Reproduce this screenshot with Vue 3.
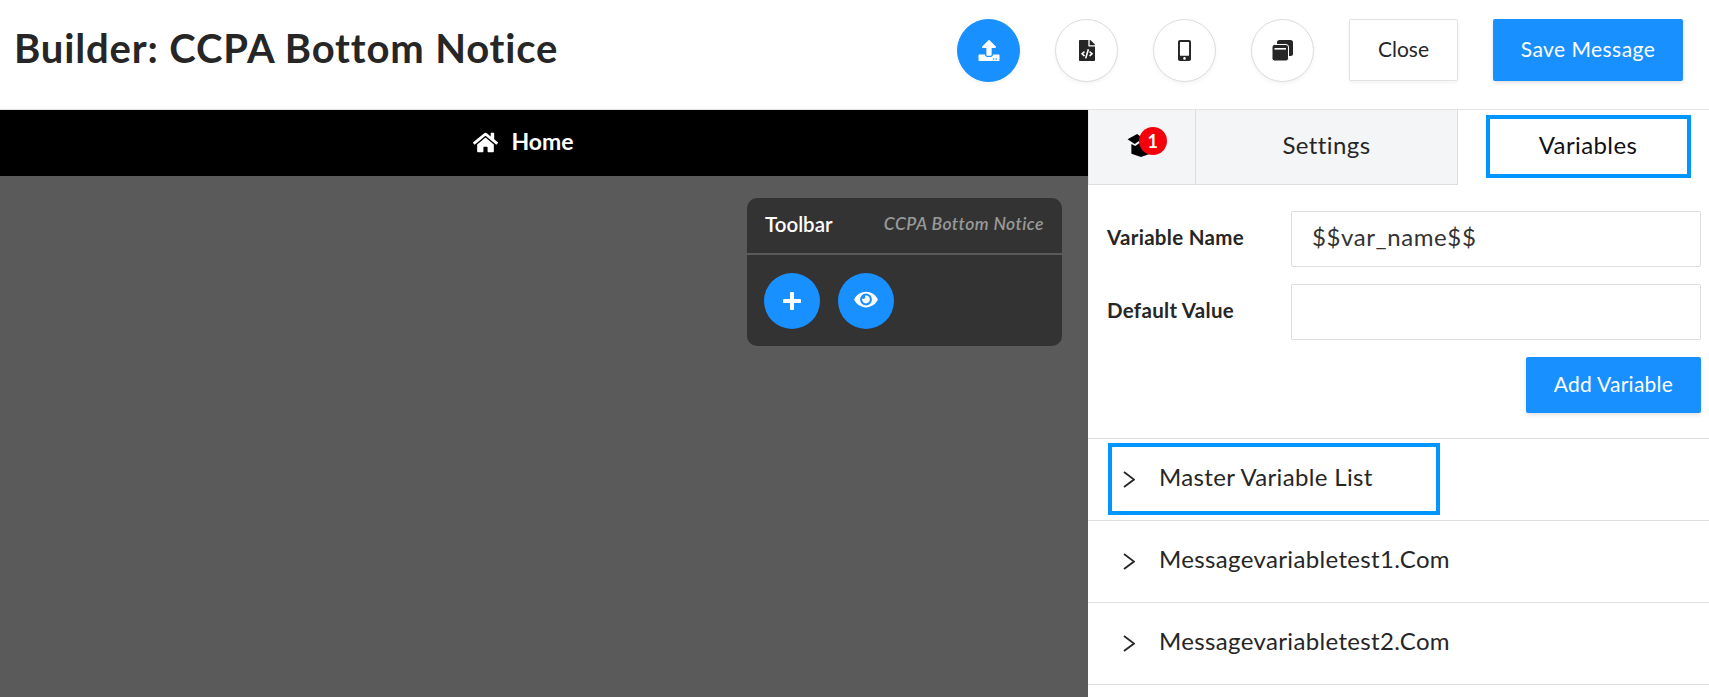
<script setup>
const rows = [
  { label: 'Master Variable List', marked: true },
  { label: 'Messagevariabletest1.Com', marked: false },
  { label: 'Messagevariabletest2.Com', marked: false }
]
</script>

<template>
  <div class="page">
    <header class="top">
      <h1 class="title">Builder: CCPA Bottom Notice</h1>
      <div class="actions">
        <button class="round primary" type="button">
          <svg class="ic-upload" viewBox="0 0 512 512"><path fill="#fff" d="M296 384h-80c-13.3 0-24-10.7-24-24V192h-87.7c-17.8 0-26.7-21.5-14.1-34.1L242.3 5.7c7.5-7.5 19.8-7.5 27.3 0l152.2 152.2c12.6 12.6 3.7 34.1-14.1 34.1H320v168c0 13.3-10.7 24-24 24zm216-8v112c0 13.3-10.7 24-24 24H24c-13.3 0-24-10.7-24-24V376c0-13.3 10.7-24 24-24h136v8c0 30.9 25.1 56 56 56h80c30.9 0 56-25.1 56-56v-8h136c13.3 0 24 10.7 24 24zm-124 88c0-11-9-20-20-20s-20 9-20 20 9 20 20 20 20-9 20-20zm64 0c0-11-9-20-20-20s-20 9-20 20 9 20 20 20 20-9 20-20z"/></svg>
        </button>
        <button class="round" type="button">
          <svg class="ic-file" viewBox="0 0 384 512" preserveAspectRatio="none"><path fill="#262626" d="M384 121.941V128H256V0h6.059c6.365 0 12.47 2.529 16.971 7.029l97.941 97.941A24.005 24.005 0 0 1 384 121.941zM248 160c-13.2 0-24-10.8-24-24V0H24C10.745 0 0 10.745 0 24v464c0 13.255 10.745 24 24 24h336c13.255 0 24-10.745 24-24V160H248zM123.206 400.505a5.4 5.4 0 0 1-7.633.246l-64.866-60.812a5.4 5.4 0 0 1 0-7.879l64.866-60.812a5.4 5.4 0 0 1 7.633.246l19.579 20.885a5.4 5.4 0 0 1-.372 7.747L101.65 336l40.763 35.874a5.4 5.4 0 0 1 .372 7.747l-19.579 20.884zm51.295 50.479l-27.453-7.97a5.402 5.402 0 0 1-3.681-6.692l61.44-211.626a5.402 5.402 0 0 1 6.692-3.681l27.452 7.97a5.4 5.4 0 0 1 3.68 6.692l-61.44 211.626a5.397 5.397 0 0 1-6.69 3.681zm160.792-111.045l-64.866 60.812a5.4 5.4 0 0 1-7.633-.246l-19.58-20.885a5.4 5.4 0 0 1 .372-7.747L284.35 336l-40.763-35.874a5.4 5.4 0 0 1-.372-7.747l19.58-20.885a5.4 5.4 0 0 1 7.633-.246l64.866 60.812a5.4 5.4 0 0 1-.001 7.879z"/></svg>
        </button>
        <button class="round" type="button">
          <svg class="ic-mobile" viewBox="0 0 320 512" preserveAspectRatio="none"><path fill="#262626" d="M272 0H48C21.5 0 0 21.5 0 48v416c0 26.5 21.5 48 48 48h224c26.5 0 48-21.5 48-48V48c0-26.5-21.5-48-48-48zM160 480c-17.7 0-32-14.3-32-32s14.3-32 32-32 32 14.3 32 32-14.3 32-32 32zm112-108c0 6.6-5.4 12-12 12H60c-6.6 0-12-5.4-12-12V60c0-6.6 5.4-12 12-12h200c6.6 0 12 5.4 12 12v312z"/></svg>
        </button>
        <button class="round" type="button">
          <svg class="ic-copy" viewBox="0 0 21 21"><rect x="5" y="0" width="16" height="16" rx="2.5" fill="#262626"/><rect x="0" y="4.5" width="16.5" height="16.5" rx="2.5" fill="#262626" stroke="#fff" stroke-width="1"/><rect x="2.5" y="8" width="11.5" height="1.6" fill="#fff"/></svg>
        </button>
        <button class="btn-close" type="button">Close</button>
        <button class="btn-save" type="button">Save Message</button>
      </div>
    </header>

    <div class="main">
      <section class="stage">
        <div class="page-bar">
          <svg class="ic-home" viewBox="0 0 576 512"><path fill="#fff" d="M280.37 148.26L96 300.11V464a16 16 0 0 0 16 16l112.06-.29a16 16 0 0 0 15.92-16V368a16 16 0 0 1 16-16h64a16 16 0 0 1 16 16v95.64a16 16 0 0 0 16 16.05L464 480a16 16 0 0 0 16-16V300L295.67 148.26a12.19 12.19 0 0 0-15.3 0zM571.6 251.47L488 182.56V44.05a12 12 0 0 0-12-12h-56a12 12 0 0 0-12 12v72.61L318.47 43a48 48 0 0 0-61 0L4.34 251.47a12 12 0 0 0-1.6 16.9l25.5 31A12 12 0 0 0 45.15 301l235.22-193.74a12.19 12.19 0 0 1 15.3 0L530.9 301a12 12 0 0 0 16.9-1.6l25.5-31a12 12 0 0 0-1.7-16.93z"/></svg>
          <span class="home-label">Home</span>
        </div>
        <div class="canvas">
          <div class="toolbar">
            <div class="toolbar-head">
              <span class="toolbar-title">Toolbar</span>
              <span class="toolbar-name">CCPA Bottom Notice</span>
            </div>
            <div class="toolbar-body">
              <button class="tool" type="button">
                <svg class="ic-plus" viewBox="0 0 18 18"><path d="M9 1.5v15M1.5 9h15" stroke="#fff" stroke-width="4" stroke-linecap="round"/></svg>
              </button>
              <button class="tool" type="button">
                <svg class="ic-eye" viewBox="0 0 576 512"><path fill="#fff" d="M572.52 241.4C518.29 135.59 410.93 64 288 64S57.68 135.64 3.48 241.41a32.35 32.35 0 0 0 0 29.19C57.71 376.41 165.07 448 288 448s230.32-71.64 284.52-177.41a32.35 32.35 0 0 0 0-29.19zM288 400a144 144 0 1 1 144-144 143.93 143.93 0 0 1-144 144zm0-240a95.31 95.31 0 0 0-25.31 3.79 47.85 47.85 0 0 1-66.9 66.9A95.78 95.78 0 1 0 288 160z"/></svg>
              </button>
            </div>
          </div>
        </div>
      </section>

      <aside class="panel">
        <div class="tabs">
          <div class="tab tab-box">
            <svg class="ic-box" viewBox="0 0 26 24"><path fill="#000" d="M0 5.5 10 0l6 4.5-8.5 6z"/><path fill="#000" d="M4 10.5 8 12.5 16 7l9 3v10L14 24 4 20.5z"/></svg>
            <span class="badge">1</span>
          </div>
          <div class="tab tab-settings">Settings</div>
          <div class="tab tab-variables">
            Variables
            <span class="mark mark-tab"></span>
          </div>
        </div>

        <form class="form" @submit.prevent>
          <div class="field">
            <label class="label">Variable Name</label>
            <div class="input">$$var_name$$</div>
          </div>
          <div class="field">
            <label class="label">Default Value</label>
            <div class="input"></div>
          </div>
          <div class="form-foot">
            <button class="btn-add" type="button">Add Variable</button>
          </div>
        </form>

        <ul class="list">
          <li v-for="row in rows" :key="row.label" class="row">
            <svg class="chev" viewBox="0 0 12 17"><path d="M1 1l10 7.5-10 7.5" fill="none" stroke="#262626" stroke-width="1.8"/></svg>
            <span class="row-label">{{ row.label }}</span>
            <span v-if="row.marked" class="mark mark-row"></span>
          </li>
        </ul>
      </aside>
    </div>
  </div>
</template>

<style>
html, body { margin: 0; background: #fff; }
</style>

<style scoped>
* { box-sizing: border-box; }
.page {
  width: 1709px;
  height: 697px;
  overflow: hidden;
  font-family: Lato, "Open Sans", sans-serif;
  color: #262626;
  background: #fff;
}
button { font-family: inherit; cursor: pointer; }

.top {
  height: 110px;
  border-bottom: 1px solid #e3e3e3;
  display: flex;
  justify-content: space-between;
  padding: 0 26px 0 14px;
}
.title {
  margin: 0;
  padding-top: 24px;
  font-size: 40px;
  line-height: 48px;
  font-weight: 700;
  letter-spacing: .85px;
  color: #262626;
}
.actions {
  display: flex;
  padding-top: 19px;
  align-items: flex-start;
}
.round {
  width: 63px;
  height: 63px;
  margin-right: 35px;
  border-radius: 50%;
  border: 1px solid #dcdcdc;
  background: #fff;
  box-shadow: 0 2px 4px rgba(0, 0, 0, .05);
  display: flex;
  align-items: center;
  justify-content: center;
  padding: 0;
}
.round.primary { background: #1890ff; border-color: #1890ff; }
.ic-upload { width: 22px; height: 21px; }
.ic-file { width: 16px; height: 21px; }
.ic-mobile { width: 13px; height: 21px; }
.ic-copy { width: 21px; height: 21px; }
.btn-close {
  width: 109px;
  height: 62px;
  margin-right: 35px;
  padding: 0 0 4px;
  border: 1px solid #e2e2e2;
  border-radius: 2px;
  background: #fff;
  color: #262626;
  font-size: 21px;
  box-shadow: 0 2px 4px rgba(0, 0, 0, .05);
}
.btn-save {
  width: 190px;
  height: 62px;
  padding: 0 0 4px;
  border: 0;
  border-radius: 2px;
  background: #1890ff;
  color: #fff;
  font-size: 21px;
  letter-spacing: .45px;
  box-shadow: 0 2px 4px rgba(0, 0, 0, .12);
}

.main { display: flex; height: 587px; }
.stage { width: 1088px; display: flex; flex-direction: column; }
.page-bar {
  height: 66px;
  background: #000;
  display: flex;
  align-items: center;
  justify-content: center;
  gap: 13px;
  color: #fff;
  padding-right: 41px;
}
.ic-home { width: 25px; height: 23px; margin-bottom: 2px; }
.home-label { font-size: 23px; font-weight: 700; padding-bottom: 4px; }
.canvas {
  flex: 1;
  background: #5a5a5a;
  display: flex;
  justify-content: flex-end;
  align-items: flex-start;
  padding: 22px 26px 0 0;
}
.toolbar {
  width: 315px;
  height: 148px;
  background: #333;
  border-radius: 10px;
  color: #fff;
}
.toolbar-head {
  height: 57px;
  border-bottom: 2px solid #5a5a5a;
  display: flex;
  justify-content: space-between;
  align-items: center;
  padding: 0 18px 4px;
}
.toolbar-title { font-size: 20.5px; font-weight: 600; }
.toolbar-name { font-size: 17.5px; font-style: italic; font-weight: 600; letter-spacing: .45px; color: #999; }
.toolbar-body { display: flex; gap: 18px; padding: 18px 17px; }
.tool {
  width: 56px;
  height: 56px;
  border: 0;
  padding: 0;
  border-radius: 50%;
  background: #1890ff;
  display: flex;
  align-items: center;
  justify-content: center;
}
.ic-plus { width: 18px; height: 18px; margin-bottom: 1px; }
.ic-eye { width: 24px; height: 21px; margin-bottom: 4px; }

.panel { width: 621px; background: #fff; }
.tabs { display: flex; height: 75px; }
.tab {
  position: relative;
  display: flex;
  align-items: center;
  justify-content: center;
  font-size: 24px;
  letter-spacing: .4px;
  color: #262626;
  padding-bottom: 6px;
}
.tab-box {
  width: 108px;
  background: #f4f5f7;
  border-bottom: 1px solid #ddd;
  border-right: 1px solid #ddd;
  border-left: 1px solid #e6e6e6;
}
.tab-settings {
  width: 262px;
  background: #f4f5f7;
  border-bottom: 1px solid #ddd;
  border-right: 1px solid #ddd;
}
.tab-variables { flex: 1; color: #111; padding-left: 9px; }
.ic-box { position: absolute; left: 38px; top: 24px; width: 26px; height: 23px; }
.badge {
  position: absolute;
  left: 50px;
  top: 17px;
  width: 28px;
  height: 28px;
  border-radius: 50%;
  background: #f5000a;
  color: #fff;
  font-size: 18px;
  font-weight: 700;
  line-height: 28px;
  text-align: center;
}
.mark { position: absolute; border: 4px solid #0096ff; pointer-events: none; }
.mark-tab { left: 28px; top: 5px; width: 205px; height: 63px; }

.form { padding: 26px 8px 0 19px; }
.field { display: flex; align-items: center; margin-bottom: 17px; }
.label {
  width: 184px;
  padding-bottom: 4px;
  font-size: 20.5px;
  font-weight: 700;
  letter-spacing: .3px;
  color: #262626;
}
.input {
  flex: 1;
  height: 56px;
  border: 1px solid #ddd;
  border-radius: 2px;
  padding: 0 20px;
  font-size: 24px;
  letter-spacing: .6px;
  line-height: 49px;
  color: #333;
}
.form-foot { display: flex; justify-content: flex-end; }
.btn-add {
  width: 175px;
  height: 56px;
  padding: 0 0 4px;
  border: 0;
  border-radius: 2px;
  background: #1890ff;
  color: #fff;
  font-size: 21px;
  letter-spacing: .27px;
  box-shadow: 0 2px 4px rgba(0, 0, 0, .12);
}

.list {
  list-style: none;
  margin: 25px 0 0;
  padding: 0;
  border-top: 1px solid #ddd;
}
.row {
  position: relative;
  height: 82px;
  border-bottom: 1px solid #ddd;
  display: flex;
  align-items: center;
  padding: 0 0 7px 35px;
}
.chev { width: 12px; height: 17px; margin: 7px 24px 0 0; flex: none; }
.row-label { font-size: 24px; letter-spacing: .35px; color: #262626; }
.mark-row { left: 20px; top: 4px; width: 332px; height: 72px; }
</style>
